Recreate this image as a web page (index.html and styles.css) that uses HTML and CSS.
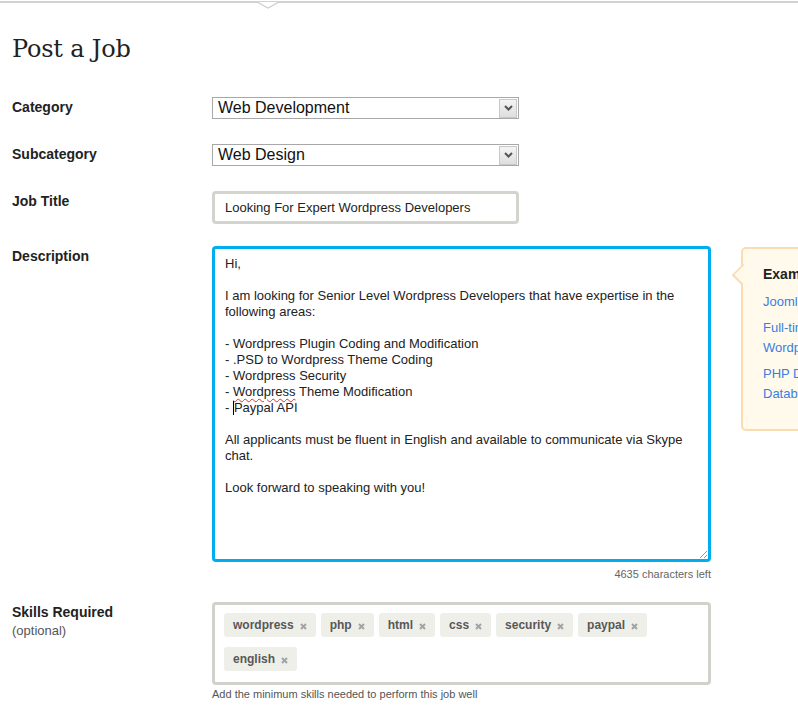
FILE: index.html
```html
<!DOCTYPE html>
<html lang="en">
<head>
<meta charset="utf-8">
<title>Post a Job</title>
<link rel="stylesheet" href="styles.css">
</head>
<body>
<div class="topbar">
  <svg class="notch" width="20" height="8" viewBox="0 0 20 8"><polygon points="0,0 10,6 20,0" fill="#fff"/><polyline points="0,0.5 10,6 20,0.5" fill="none" stroke="#cfcfcf" stroke-width="1.2"/></svg>
</div>
<main class="page">
  <h1 class="title">Post a Job</h1>

  <div class="row row-select">
    <div class="label">Category</div>
    <div class="select"><span class="select-value">Web Development</span><span class="select-btn"><svg width="9" height="6" viewBox="0 0 9 6"><polyline points="1,1 4.5,4.5 8,1" fill="none" stroke="#555" stroke-width="2"/></svg></span></div>
  </div>

  <div class="row row-select">
    <div class="label">Subcategory</div>
    <div class="select"><span class="select-value">Web Design</span><span class="select-btn"><svg width="9" height="6" viewBox="0 0 9 6"><polyline points="1,1 4.5,4.5 8,1" fill="none" stroke="#555" stroke-width="2"/></svg></span></div>
  </div>

  <div class="row row-title">
    <div class="label">Job Title</div>
    <div class="input">Looking For Expert Wordpress Developers</div>
  </div>

  <div class="row row-desc">
    <div class="label">Description</div>
    <div class="field">
      <div class="textarea"><div class="ta-text">Hi,

I am looking for Senior Level Wordpress Developers that have expertise in the following areas:

- Wordpress Plugin Coding and Modification
- .PSD to Wordpress Theme Coding
- Wordpress Security
- <span class="spell">Wordpress</span> Theme Modification
- <span class="caret"></span>Paypal API

All applicants must be fluent in English and available to communicate via Skype chat.

Look forward to speaking with you!</div>
        <svg class="grip" width="8" height="8" viewBox="0 0 8 8"><line x1="1" y1="8" x2="8" y2="1" stroke="#999" stroke-width="1"/><line x1="5" y1="8" x2="8" y2="5" stroke="#999" stroke-width="1"/></svg>
      </div>
      <div class="counter">4635 characters left</div>
    </div>
    <aside class="tip">
      <span class="tip-arrow"></span>
      <div class="tip-head">Examples</div>
      <a class="tip-link">Joomla Developer Needed</a>
      <a class="tip-link">Full-time Senior Level Wordpress Developer</a>
      <a class="tip-link">PHP Developer for MySQL Database Project</a>
    </aside>
  </div>

  <div class="row row-skills">
    <div class="label">Skills Required<span class="optional">(optional)</span></div>
    <div class="field">
      <div class="skills">
        <span class="tag">wordpress<svg class="x" width="7" height="7" viewBox="0 0 7 7"><path d="M1 1L6 6M6 1L1 6" stroke="#a3a3a3" stroke-width="2"/></svg></span>
        <span class="tag">php<svg class="x" width="7" height="7" viewBox="0 0 7 7"><path d="M1 1L6 6M6 1L1 6" stroke="#a3a3a3" stroke-width="2"/></svg></span>
        <span class="tag">html<svg class="x" width="7" height="7" viewBox="0 0 7 7"><path d="M1 1L6 6M6 1L1 6" stroke="#a3a3a3" stroke-width="2"/></svg></span>
        <span class="tag">css<svg class="x" width="7" height="7" viewBox="0 0 7 7"><path d="M1 1L6 6M6 1L1 6" stroke="#a3a3a3" stroke-width="2"/></svg></span>
        <span class="tag">security<svg class="x" width="7" height="7" viewBox="0 0 7 7"><path d="M1 1L6 6M6 1L1 6" stroke="#a3a3a3" stroke-width="2"/></svg></span>
        <span class="tag">paypal<svg class="x" width="7" height="7" viewBox="0 0 7 7"><path d="M1 1L6 6M6 1L1 6" stroke="#a3a3a3" stroke-width="2"/></svg></span>
        <span class="tag">english<svg class="x" width="7" height="7" viewBox="0 0 7 7"><path d="M1 1L6 6M6 1L1 6" stroke="#a3a3a3" stroke-width="2"/></svg></span>
      </div>
      <div class="help">Add the minimum skills needed to perform this job well</div>
    </div>
  </div>
</main>
</body>
</html>
```

FILE: styles.css
```css
html, body {
  margin: 0;
  padding: 0;
  overflow: hidden;
  background: #fff;
}
body {
  font-family: "Liberation Sans", Arial, sans-serif;
  color: #222;
  width: 798px;
  height: 709px;
}
.topbar {
  position: relative;
  height: 2px;
  margin-top: 1px;
  background: #d2d2d2;
}
.notch {
  position: absolute;
  left: 258px;
  top: 1px;
}
.page {
  padding-left: 12px;
}
.title {
  margin: 31px 0 33px;
  font-family: "DejaVu Serif", "Liberation Serif", serif;
  font-weight: normal;
  font-size: 24px;
  line-height: 30px;
  color: #222;
  letter-spacing: -0.2px;
}
.row {
  display: grid;
  grid-template-columns: 200px 499px;
  position: relative;
}
.label {
  padding-top: 2px;
  font-size: 14px;
  font-weight: bold;
  line-height: 16px;
  color: #222;
}
.optional {
  display: block;
  margin-top: 2px;
  font-weight: normal;
  font-size: 13px;
  line-height: 18px;
  color: #555;
}
.row-select {
  margin-bottom: 25px;
}
.select {
  width: 307px;
  height: 22px;
  box-sizing: border-box;
  border: 1px solid #a8a8a8;
  display: flex;
  align-items: center;
  justify-content: space-between;
  background: #fff;
}
.select-value {
  padding-left: 5px;
  font-size: 16px;
  color: #111;
}
.select-btn {
  width: 16px;
  height: 17px;
  margin-right: 1px;
  border: 1px solid #c9c9c9;
  background: linear-gradient(#f4f4f4, #dedede);
  display: flex;
  align-items: center;
  justify-content: center;
}
.row-title {
  margin-bottom: 22px;
}
.input {
  width: 307px;
  height: 33px;
  box-sizing: border-box;
  border: 3px solid #d4d4cf;
  border-radius: 4px;
  padding-left: 10px;
  display: flex;
  align-items: center;
  font-size: 13px;
  color: #222;
}
.row-desc {
  margin-bottom: 21px;
}
.textarea {
  position: relative;
  height: 316px;
  box-sizing: border-box;
  border: 3px solid #00aeef;
  border-radius: 4px;
  padding: 7px 10px 0 10px;
}
.ta-text {
  white-space: pre-wrap;
  font-size: 13px;
  line-height: 16px;
  color: #222;
}
.spell {
  text-decoration: underline wavy #e03030;
  text-decoration-thickness: 1px;
  text-underline-offset: 2px;
}
.caret {
  display: inline-block;
  width: 1px;
  height: 14px;
  background: #000;
  vertical-align: -3px;
}
.grip {
  position: absolute;
  right: 1px;
  bottom: 1px;
}
.counter {
  margin-top: 5px;
  text-align: right;
  font-size: 11px;
  line-height: 14px;
  color: #666;
}
.tip {
  position: absolute;
  left: 729px;
  top: 1px;
  width: 240px;
  height: 184px;
  box-sizing: border-box;
  background: #fffaec;
  border: 2px solid #fbdcb2;
  border-radius: 5px;
  padding: 16px 0 0 20px;
}
.tip-arrow {
  position: absolute;
  left: -9px;
  top: 17px;
  width: 14px;
  height: 14px;
  background: #fffaec;
  border-left: 2px solid #fbdcb2;
  border-bottom: 2px solid #fbdcb2;
  transform: rotate(45deg) scaleX(0.8);
}
.tip-head {
  font-size: 14px;
  font-weight: bold;
  line-height: 18px;
  color: #222;
  margin-bottom: 9px;
}
.tip-link {
  display: block;
  font-size: 13px;
  line-height: 20px;
  color: #3a7ee0;
  margin-bottom: 6px;
  width: 160px;
}
.skills {
  height: 83px;
  box-sizing: border-box;
  border: 3px solid #d2d2cc;
  border-radius: 4px;
  padding: 8px 9px;
  display: flex;
  flex-wrap: wrap;
  align-content: flex-start;
  gap: 10px 5px;
}
.tag {
  height: 24px;
  display: inline-flex;
  align-items: center;
  gap: 6px;
  padding: 0 9px 0 9px;
  background: #efefea;
  border-radius: 3px;
  font-size: 12px;
  font-weight: bold;
  color: #585858;
}
.x {
  display: block;
  margin-top: 2px;
}
.help {
  margin-top: 3px;
  font-size: 11px;
  line-height: 13px;
  color: #555;
}
```
